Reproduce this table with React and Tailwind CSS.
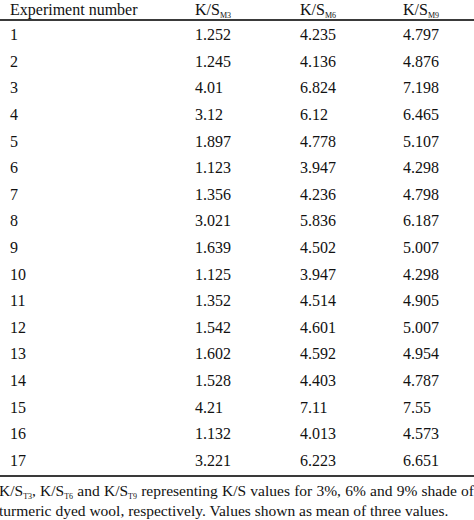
const rows = [
  ["1", "1.252", "4.235", "4.797"],
  ["2", "1.245", "4.136", "4.876"],
  ["3", "4.01", "6.824", "7.198"],
  ["4", "3.12", "6.12", "6.465"],
  ["5", "1.897", "4.778", "5.107"],
  ["6", "1.123", "3.947", "4.298"],
  ["7", "1.356", "4.236", "4.798"],
  ["8", "3.021", "5.836", "6.187"],
  ["9", "1.639", "4.502", "5.007"],
  ["10", "1.125", "3.947", "4.298"],
  ["11", "1.352", "4.514", "4.905"],
  ["12", "1.542", "4.601", "5.007"],
  ["13", "1.602", "4.592", "4.954"],
  ["14", "1.528", "4.403", "4.787"],
  ["15", "4.21", "7.11", "7.55"],
  ["16", "1.132", "4.013", "4.573"],
  ["17", "3.221", "6.223", "6.651"],
];

// K/S com subscrito
function KS({ sub }) {
  return (
    <span>
      K/S<sub className="text-[8px] relative top-[3px] align-baseline">{sub}</sub>
    </span>
  );
}

export default function App() {
  return (
    <div className="w-[474px] h-[520px] overflow-hidden bg-white text-[#111] font-['Liberation_Serif',serif]">
      {/* cabeçalho */}
      <div className="grid grid-cols-[195px_105px_103px_1fr] h-[21px] items-center text-[16px] leading-none border-b-2 border-[#3a3a3a]">
        <div className="pl-[10px]">Experiment number</div>
        <div><KS sub="M3" /></div>
        <div><KS sub="M6" /></div>
        <div><KS sub="M9" /></div>
      </div>

      {/* linhas */}
      <div className="pt-[1px] pb-[1px] border-b-2 border-[#3a3a3a]">
        {rows.map((r) => (
          <div key={r[0]} className="grid grid-cols-[195px_105px_103px_1fr] h-[26.6px] items-center text-[16px] leading-none">
            <div className="pl-[10px]">{r[0]}</div>
            <div>{r[1]}</div>
            <div>{r[2]}</div>
            <div>{r[3]}</div>
          </div>
        ))}
      </div>

      {/* nota de rodapé */}
      <div className="ml-[-1px] pt-[4px] text-[15.5px] leading-[20px] text-justify [text-align-last:left]">
        <KS sub="T3" />, <KS sub="T6" /> and <KS sub="T9" /> representing K/S values for 3%, 6% and 9% shade of turmeric dyed wool, respectively. Values shown as mean of three values.
      </div>
    </div>
  );
}
